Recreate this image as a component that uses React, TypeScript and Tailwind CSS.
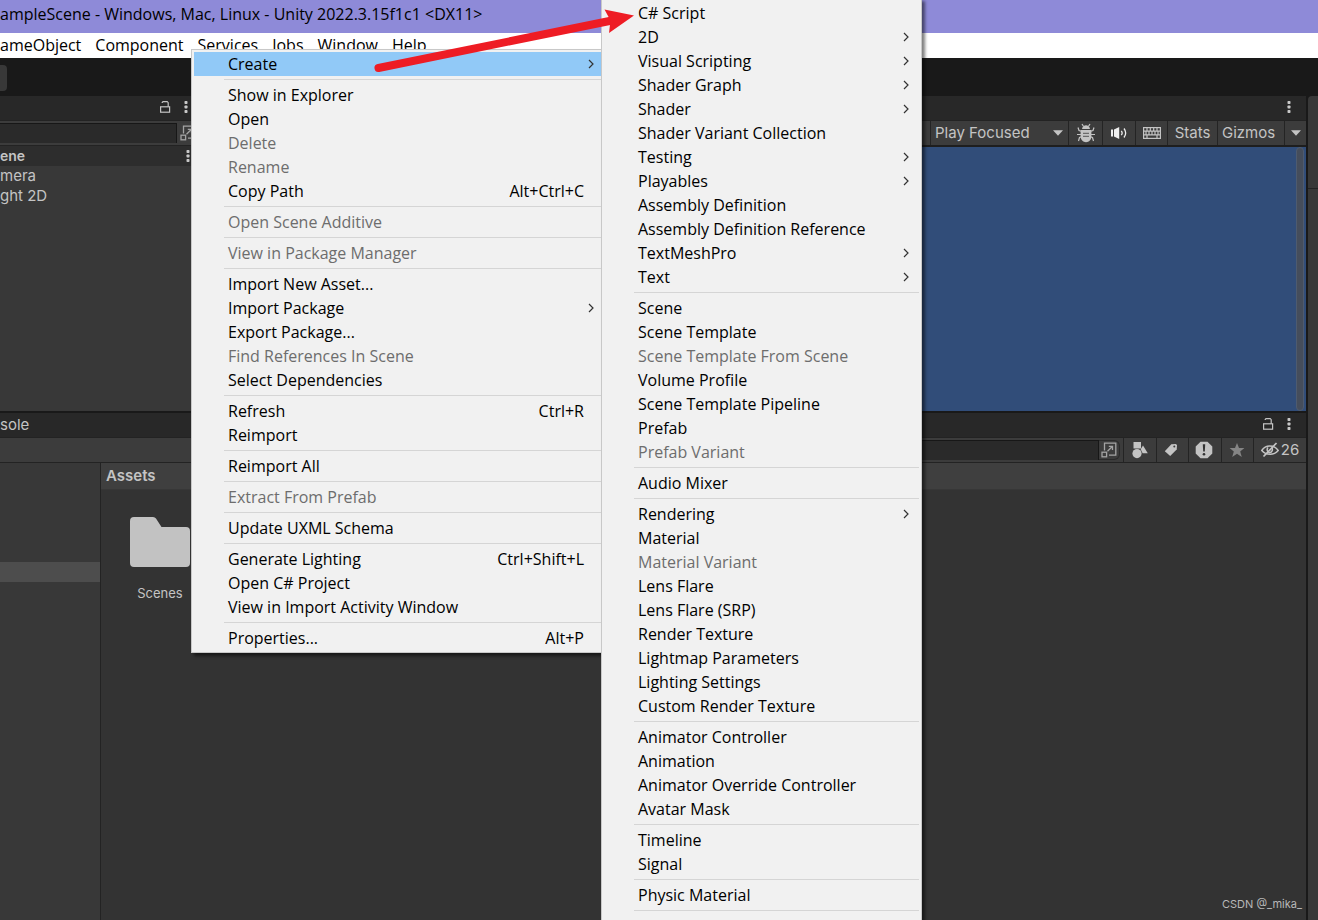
import type { ReactNode } from 'react';
import clsx from 'clsx';

interface MenuEntry {
  label: string;
  shortcut?: string;
  submenu?: boolean;
  disabled?: boolean;
  active?: boolean;
}

const menuBar = ['ameObject', 'Component', 'Services', 'Jobs', 'Window', 'Help'];

// Each inner array is a group, groups are split by a separator
const contextMenu: MenuEntry[][] = [
  [{ label: 'Create', submenu: true, active: true }],
  [
    { label: 'Show in Explorer' },
    { label: 'Open' },
    { label: 'Delete', disabled: true },
    { label: 'Rename', disabled: true },
    { label: 'Copy Path', shortcut: 'Alt+Ctrl+C' }
  ],
  [{ label: 'Open Scene Additive', disabled: true }],
  [{ label: 'View in Package Manager', disabled: true }],
  [
    { label: 'Import New Asset...' },
    { label: 'Import Package', submenu: true },
    { label: 'Export Package...' },
    { label: 'Find References In Scene', disabled: true },
    { label: 'Select Dependencies' }
  ],
  [{ label: 'Refresh', shortcut: 'Ctrl+R' }, { label: 'Reimport' }],
  [{ label: 'Reimport All' }],
  [{ label: 'Extract From Prefab', disabled: true }],
  [{ label: 'Update UXML Schema' }],
  [
    { label: 'Generate Lighting', shortcut: 'Ctrl+Shift+L' },
    { label: 'Open C# Project' },
    { label: 'View in Import Activity Window' }
  ],
  [{ label: 'Properties...', shortcut: 'Alt+P' }]
];

const createMenu: MenuEntry[][] = [
  [
    { label: 'C# Script' },
    { label: '2D', submenu: true },
    { label: 'Visual Scripting', submenu: true },
    { label: 'Shader Graph', submenu: true },
    { label: 'Shader', submenu: true },
    { label: 'Shader Variant Collection' },
    { label: 'Testing', submenu: true },
    { label: 'Playables', submenu: true },
    { label: 'Assembly Definition' },
    { label: 'Assembly Definition Reference' },
    { label: 'TextMeshPro', submenu: true },
    { label: 'Text', submenu: true }
  ],
  [
    { label: 'Scene' },
    { label: 'Scene Template' },
    { label: 'Scene Template From Scene', disabled: true },
    { label: 'Volume Profile' },
    { label: 'Scene Template Pipeline' },
    { label: 'Prefab' },
    { label: 'Prefab Variant', disabled: true }
  ],
  [{ label: 'Audio Mixer' }],
  [
    { label: 'Rendering', submenu: true },
    { label: 'Material' },
    { label: 'Material Variant', disabled: true },
    { label: 'Lens Flare' },
    { label: 'Lens Flare (SRP)' },
    { label: 'Render Texture' },
    { label: 'Lightmap Parameters' },
    { label: 'Lighting Settings' },
    { label: 'Custom Render Texture' }
  ],
  [
    { label: 'Animator Controller' },
    { label: 'Animation' },
    { label: 'Animator Override Controller' },
    { label: 'Avatar Mask' }
  ],
  [{ label: 'Timeline' }, { label: 'Signal' }],
  [{ label: 'Physic Material' }],
  []
];

function KebabIcon() {
  return (
    <svg className="h-3 w-1 shrink-0" viewBox="0 0 4 12" fill="#c8c8c8">
      <rect x="0.5" y="0" width="3" height="3" rx="0.7" />
      <rect x="0.5" y="4.5" width="3" height="3" rx="0.7" />
      <rect x="0.5" y="9" width="3" height="3" rx="0.7" />
    </svg>
  );
}

function LockIcon() {
  return (
    <svg className="h-3 w-3 shrink-0" viewBox="0 0 12 12" fill="none" stroke="#c4c4c4" strokeWidth="1.2">
      <rect x="1.6" y="5.8" width="9" height="5.4" />
      <path d="M3.2 1.9V1.6L4 0.7h4.2l1 1V5.8" />
    </svg>
  );
}

function PickerIcon() {
  return (
    <svg className="h-4 w-4 shrink-0" viewBox="0 0 16 16" fill="none" stroke="#a4a4a4" strokeWidth="1.3">
      <path d="M3.5 8.5V1.2h11.3v12H8" />
      <rect x="1" y="10.2" width="4.6" height="4.6" />
      <path d="M6.5 9.3l4.8-4.8M7.8 4.3h3.7V8" />
    </svg>
  );
}

function CaretIcon() {
  return (
    <svg className="h-2 w-3 shrink-0" viewBox="0 0 12 8" fill="#c4c4c4">
      <path d="M1 1.2h10L6 6.8z" />
    </svg>
  );
}

function BugIcon() {
  return (
    <svg className="h-5 w-5" viewBox="0 0 20 20" fill="#c4c4c4" stroke="#c4c4c4">
      <path
        d="M6 1l1.6 2.5M14 1l-1.6 2.5M2 4.5l1 3 3 1M18 4.5l-1 3-3 1M1 11.500h4M19 11.500h-4M2.500 18l1-3.500 3-1M17.500 18l-1-3.500-3-1"
        fill="none"
        strokeWidth="1.2"
      />
      <path d="M6 6C6.500 3.500 8.200 2.300 10 2.300S13.500 3.500 14 6z" stroke="none" />
      <path d="M4.600 7h10.800v6.500c0 3.400-2.500 5.700-5.400 5.700s-5.400-2.300-5.400-5.700z" stroke="none" />
      <path d="M7 10.300h6M7 13.300h6" stroke="#555555" strokeWidth="1" />
    </svg>
  );
}

function SpeakerIcon() {
  return (
    <svg className="h-4 w-4" viewBox="0 0 16 16">
      <path d="M0 4.500h2v7H0zM3 4.500L8.200 2v12L3 11.500z" fill="#eeeeee" />
      <path d="M10.300 5.800c1 1.300 1 3.100 0 4.400M13 3.500c2 2.700 2 6.300 0 9" fill="none" stroke="#eeeeee" strokeWidth="1.300" />
    </svg>
  );
}

function KeyboardIcon() {
  return (
    <svg className="h-3 w-[18px]" viewBox="0 0 18 12" fill="none" stroke="#c4c4c4" strokeWidth="1.200">
      <rect x="0.600" y="0.600" width="16.800" height="10.800" />
      <path d="M0.600 4.200h16.800M0.600 7.800h16.800M4 0.600v3.600M7.300 0.600v3.600M10.700 0.600v3.600M14 0.600v3.600M3 4.200v3.600M6 4.200v3.600M9 4.200v3.600M12 4.200v3.600M15 4.200v3.600M4 7.800v3.600M14 7.800v3.600" />
    </svg>
  );
}

function ShapesIcon() {
  return (
    <svg className="h-[18px] w-4" viewBox="0 0 16 18" fill="#c4c4c4">
      <path d="M1.500 1h7.500v6.500H1.500z" />
      <circle cx="5" cy="12.600" r="4.600" />
      <path d="M11 4.500l4.800 7.700h-5.200L8.700 8.300z" />
    </svg>
  );
}

function TagIcon() {
  return (
    <svg className="h-[14px] w-[14px]" viewBox="0 0 14 14">
      <path d="M7.300 1.300L11.800 1l1.200 1-.3 4.500-6.500 6.500L0.800 8.200z" fill="#c4c4c4" />
      <circle cx="10.300" cy="3.600" r="1" fill="#3c3c3c" />
    </svg>
  );
}

function AlertIcon() {
  return (
    <svg className="h-[18px] w-[18px]" viewBox="0 0 18 18">
      <path d="M5.500 0.700h7l4.800 4.800v7l-4.800 4.800h-7L0.700 12.500v-7z" fill="#c4c4c4" />
      <path d="M7.800 3.300h2.400l-.4 7.200H8.200z" fill="#333333" />
      <circle cx="9" cy="13.200" r="1.300" fill="#333333" />
    </svg>
  );
}

function StarIcon() {
  return (
    <svg className="h-4 w-4" viewBox="0 0 16 16" fill="#858585">
      <path d="M8 1l2 5h5.400l-4.200 3.400L12.800 15 8 11.700 3.200 15l1.600-5.600L.6 6H6z" />
    </svg>
  );
}

function HiddenIcon() {
  return (
    <svg className="h-4 w-[18px]" viewBox="0 0 18 16" fill="none" stroke="#c4c4c4" strokeWidth="1.500">
      <path d="M0.800 8.500C4.500 2.600 13 2.600 17.200 8.500 13 13.600 5 13.600 0.800 8.500z" />
      <path d="M7 5.500c-1.600 2-.8 4.600 1.500 5.200 2.500-.4 3.500-2.800 2.500-5" />
      <path d="M2.500 14.500L15.500 1" strokeWidth="1.800" />
    </svg>
  );
}

function FolderIcon() {
  return (
    <svg className="h-[50px] w-[60px]" viewBox="0 0 60 50" fill="#c2c2c2">
      <path d="M4 0h19q2 0 3 1.600L31.500 10H56q4 0 4 4v32q0 4-4 4H4q-4 0-4-4V4q0-4 4-4z" />
    </svg>
  );
}

function ToolButton({ label, className, children }: { label?: string; className?: string; children: ReactNode }) {
  return (
    <button
      aria-label={label}
      className={clsx('flex shrink-0 items-center border-l border-[#242424] bg-[#3c3c3c]', className)}
    >
      {children}
    </button>
  );
}

function MenuItem({ entry }: { entry: MenuEntry }) {
  return (
    <button
      role="menuitem"
      disabled={entry.disabled}
      className={clsx(
        'flex h-6 w-full items-center pr-[7px] pl-[34px] text-left',
        entry.disabled ? 'text-[#6d6d6d]' : 'text-black',
        entry.active && 'bg-[#91c9f7]'
      )}
    >
      <span className="flex-1 whitespace-nowrap">{entry.label}</span>
      {entry.shortcut && <span className="pr-[11px]">{entry.shortcut}</span>}
      {entry.submenu && (
        <svg className="h-[10px] w-2" viewBox="0 0 8 10" fill="none" stroke="#333333" strokeWidth="1.200">
          <path d="M2 1l4 4-4 4" />
        </svg>
      )}
    </button>
  );
}

function Menu({ groups, className }: { groups: MenuEntry[][]; className?: string }) {
  return (
    <div
      role="menu"
      className={clsx(
        'absolute border border-[#c8c8c8] bg-[#f1f1f1] font-["Open_Sans","Noto_Sans",sans-serif] text-base leading-6 shadow-[3px_3px_3px_rgba(0,0,0,0.5)]',
        className
      )}
    >
      {groups.map((group, i) => (
        <div key={i}>
          {i > 0 && <div role="separator" className="my-[3px] ml-[30px] h-px bg-[#d5d5d5]" />}
          {group.map((entry) => (
            <MenuItem key={entry.label} entry={entry} />
          ))}
        </div>
      ))}
    </div>
  );
}

function Hierarchy() {
  return (
    <section className="flex w-[196px] shrink-0 flex-col bg-[#383838]">
      <div className="flex h-[25px] items-center justify-end gap-[13px] border-b border-[#232323] bg-[#282828] pr-2 pb-[2px]">
        <LockIcon />
        <KebabIcon />
      </div>
      <div className="flex h-[25px] items-center border-b border-[#232323] bg-[#3c3c3c] py-[2px]">
        <input
          aria-label="Search hierarchy"
          className="h-5 min-w-0 flex-1 border-t border-r border-[#171717] bg-[#2a2a2a] px-2 outline-none"
        />
        <div className="pl-[3px]">
          <PickerIcon />
        </div>
      </div>
      <div className="flex h-5 items-center justify-between bg-[#2d2d2d] pr-[6px]">
        <span className="text-sm font-semibold">ene</span>
        <KebabIcon />
      </div>
      <div className="h-5 leading-5">mera</div>
      <div className="h-5 leading-5">ght 2D</div>
    </section>
  );
}

function GameView() {
  return (
    <section className="flex min-w-0 flex-1 flex-col bg-[#282828]">
      <div className="flex h-[25px] items-center justify-end rounded-tr border-b border-[#232323] bg-[#282828] pr-[15px] pb-[2px]">
        <KebabIcon />
      </div>
      <div className="flex h-[26px] justify-end border-b-2 border-[#1e1e1e] bg-[#3c3c3c]">
        <ToolButton className="w-[138px] justify-between pr-1 pl-1">
          Play Focused
          <CaretIcon />
        </ToolButton>
        <ToolButton label="Frame debugger" className="w-[34px] justify-center">
          <BugIcon />
        </ToolButton>
        <ToolButton label="Mute audio" className="w-[33px] justify-center">
          <SpeakerIcon />
        </ToolButton>
        <ToolButton label="Shortcuts" className="w-8 justify-center">
          <KeyboardIcon />
        </ToolButton>
        <ToolButton className="w-[50px] justify-center">Stats</ToolButton>
        <ToolButton className="w-[67px] pl-1">Gizmos</ToolButton>
        <ToolButton label="Gizmos options" className="w-[22px] justify-center">
          <CaretIcon />
        </ToolButton>
      </div>
      <div className="flex flex-1 justify-end bg-[#314d79] pr-[2px]">
        <div className="w-2 rounded border border-[#4e5b6f] bg-[#454d5b]" />
      </div>
    </section>
  );
}

function Project() {
  return (
    <section className="flex min-h-0 flex-1 flex-col border-t-2 border-[#191919]">
      <div className="flex h-[25px] shrink-0 items-center justify-between border-b border-[#232323] bg-[#282828] pr-[15px]">
        <span>sole</span>
        <div className="flex items-center gap-[13px] pb-[2px]">
          <LockIcon />
          <KebabIcon />
        </div>
      </div>
      <div className="flex h-[25px] shrink-0 border-b border-[#232323] bg-[#3c3c3c]">
        <div className="flex flex-1 items-center justify-end pr-[3px]">
          <input
            aria-label="Search assets"
            className="h-5 w-[400px] border-t border-r border-[#171717] bg-[#2a2a2a] px-2 outline-none"
          />
          <div className="flex h-5 items-center rounded-r-md border-y border-r border-[#2a2a2a] px-[2px]">
            <PickerIcon />
          </div>
        </div>
        <ToolButton label="Search by type" className="w-[33px] justify-center">
          <ShapesIcon />
        </ToolButton>
        <ToolButton label="Search by label" className="w-8 pl-[7px]">
          <TagIcon />
        </ToolButton>
        <ToolButton label="Search by import log" className="w-[33px] pl-[6px]">
          <AlertIcon />
        </ToolButton>
        <ToolButton label="Favorites" className="w-8 pl-[7px]">
          <StarIcon />
        </ToolButton>
        <ToolButton className="w-[53px] justify-center gap-[2px]">
          <HiddenIcon />
          26
        </ToolButton>
      </div>
      <div className="flex min-h-0 flex-1">
        <div className="w-[101px] shrink-0 border-r border-[#232323] bg-[#383838] pt-[99px]">
          <div className="h-5 bg-[#4d4d4d]" />
        </div>
        <div className="flex-1 bg-[#333333]">
          <div className="flex h-[27px] items-center border-b border-[#373737] bg-[#3f3f3f] pl-[5px] font-semibold">
            Assets
          </div>
          <div className="flex w-[118px] flex-col items-center pt-[27px]">
            <FolderIcon />
            <span className="pt-4 text-[13px] leading-5">Scenes</span>
          </div>
        </div>
      </div>
    </section>
  );
}

export default function App() {
  return (
    <div className="relative flex h-screen flex-col overflow-hidden bg-[#191919] font-[Inter,sans-serif] text-[15px] leading-5 text-[#c4c4c4]">
      <header className="shrink-0 font-['Open_Sans','Noto_Sans',sans-serif] text-base leading-5 text-black">
        <div className="flex h-[33px] items-center bg-[#8e8ad8] pb-[6px]">
          <h1 className="whitespace-nowrap">ampleScene - Windows, Mac, Linux - Unity 2022.3.15f1c1 &lt;DX11&gt;</h1>
        </div>
        <nav className="flex h-[25px] items-center gap-[14px] bg-white pb-[2px]">
          {menuBar.map((item) => (
            <button key={item}>{item}</button>
          ))}
        </nav>
      </header>

      <div className="flex h-[38px] shrink-0 items-center pt-px">
        <div className="h-[26px] w-[7px] rounded-r bg-[#383838]" />
      </div>

      <main className="flex min-h-0 flex-1">
        <div className="flex min-w-0 flex-1 flex-col">
          <div className="flex h-[315px] shrink-0 gap-[2px]">
            <Hierarchy />
            <GameView />
          </div>
          <Project />
        </div>
        <aside className="ml-[2px] w-[10px] shrink-0 rounded-tl bg-[#383838] pt-[92px]">
          <div className="h-px bg-[#232323]" />
        </aside>
      </main>

      <Menu groups={contextMenu} className="top-[49px] left-[191px] w-[412px] py-[2px] pl-[2px]" />
      <Menu groups={createMenu} className="-top-[2px] -bottom-[10px] left-[601px] w-[321px] px-[2px] pt-[2px] [&_svg]:mr-[2px]" />

      {/* Red arrow from Create to C# Script */}
      <svg
        className="pointer-events-none absolute top-0 left-[370px] h-20 w-[270px]"
        viewBox="370 0 270 80"
        fill="#ee1c24"
      >
        <path d="M378.500 68L612 20.500" stroke="#ee1c24" strokeWidth="8" strokeLinecap="round" />
        <path d="M634 15.500L604.500 9.500l6 11-1.500 12.500z" />
      </svg>

      <div className="absolute right-4 bottom-[6px] text-[11px] leading-5 text-[#b8b8b8]">CSDN @_mika_</div>
    </div>
  );
}
